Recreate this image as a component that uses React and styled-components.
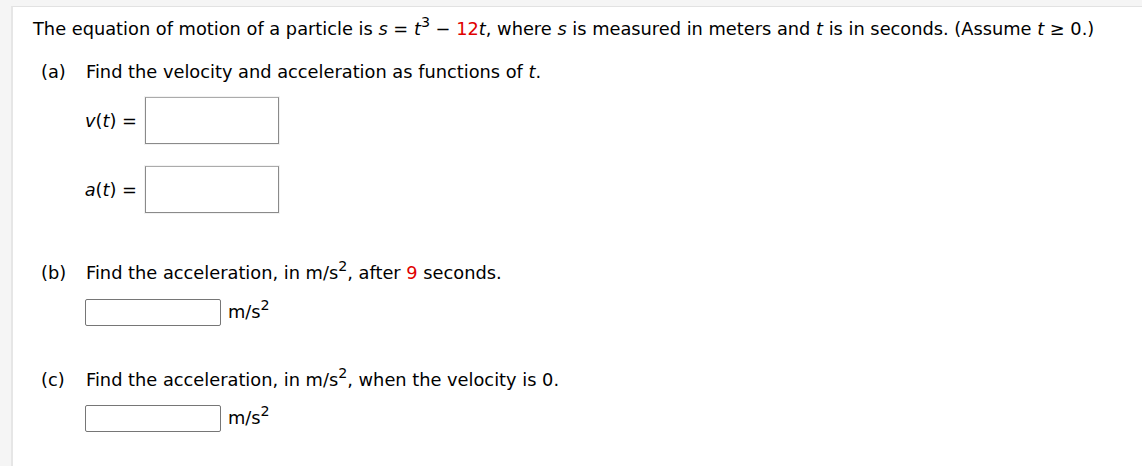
import React from "react";
import styled, { createGlobalStyle } from "styled-components";

const Global = createGlobalStyle`
  html, body { margin: 0; padding: 0; }
  body {
    background: #f5f5f5;
    font-family: "DejaVu Sans", Verdana, sans-serif;
    color: #000;
    width: 1142px;
    height: 466px;
    overflow: hidden;
  }
`;

const Frame = styled.div`
  padding-top: 6px;
  padding-left: 11px;
  height: 466px;
  box-sizing: border-box;
`;

const Panel = styled.div`
  background: #fff;
  border-top: 1px solid #e2e2e2;
  border-left: 2px solid #e6e6e6;
  height: 100%;
  box-sizing: border-box;
  padding: 11px 0 0 20px;
  font-size: 17.8px;
  line-height: 22px;
`;

const Question = styled.div`
  white-space: nowrap;
`;

const Var = styled.i`
  font-style: italic;
`;

const Red = styled.span`
  color: #e00000;
`;

const Sup = styled.sup`
  font-size: 0.8em;
  line-height: 0;
  vertical-align: 0.55em;
`;

const Part = styled.div`
  display: flex;
  margin-top: ${(p) => p.$top}px;
  padding-left: 8px;
  white-space: nowrap;
`;

const PartLabel = styled.span`
  width: 45px;
  flex: none;
`;

const Answers = styled.div`
  display: flex;
  flex-direction: column;
  gap: 22px;
  margin-top: 14px;
`;

const FnRow = styled.div`
  display: flex;
  align-items: center;
`;

const FnLabel = styled.span`
  width: 60px;
  padding-left: 44px;
  text-align: right;
  padding-right: 8px;
  flex: none;
  white-space: nowrap;
`;

const BigBox = styled.div`
  width: 134px;
  height: 47px;
  box-sizing: border-box;
  border: 1px solid #8a8a8a;
  border-top-color: #ababab;
  background: #fff;
  box-shadow: 0 0 0 1px #f2f2f2;
`;

const UnitRow = styled.div`
  display: flex;
  align-items: center;
  margin-top: ${(p) => p.$top}px;
  padding-left: 52px;
  gap: 7px;
`;

const SmallBox = styled.div`
  width: 136px;
  height: 27px;
  box-sizing: border-box;
  border: 1px solid #767676;
  border-radius: 2px;
  background: #fff;
`;

const Unit = styled.span`
  position: relative;
  top: -1px;
`;

export default function App() {
  return (
    <>
      <Global />
      <Frame>
        <Panel>
          <Question>
            The equation of motion of a particle is <Var>s</Var> = <Var>t</Var>
            <Sup>3</Sup> − <Red>12</Red>
            <Var>t</Var>, where <Var>s</Var> is measured in meters and <Var>t</Var> is in seconds. (Assume <Var>t</Var> ≥ 0.)
          </Question>

          <Part $top={21}>
            <PartLabel>(a)</PartLabel>
            <span>
              Find the velocity and acceleration as functions of <Var>t</Var>.
            </span>
          </Part>
          <Answers>
            <FnRow>
              <FnLabel>
                <Var>v</Var>(<Var>t</Var>) =
              </FnLabel>
              <BigBox />
            </FnRow>
            <FnRow>
              <FnLabel>
                <Var>a</Var>(<Var>t</Var>) =
              </FnLabel>
              <BigBox />
            </FnRow>
          </Answers>

          <Part $top={49}>
            <PartLabel>(b)</PartLabel>
            <span>
              Find the acceleration, in m/s<Sup>2</Sup>, after <Red>9</Red> seconds.
            </span>
          </Part>
          <UnitRow $top={15}>
            <SmallBox />
            <Unit>
              m/s<Sup>2</Sup>
            </Unit>
          </UnitRow>

          <Part $top={43}>
            <PartLabel>(c)</PartLabel>
            <span>Find the acceleration, in m/s<Sup>2</Sup>, when the velocity is 0.</span>
          </Part>
          <UnitRow $top={14}>
            <SmallBox />
            <Unit>
              m/s<Sup>2</Sup>
            </Unit>
          </UnitRow>
        </Panel>
      </Frame>
    </>
  );
}
